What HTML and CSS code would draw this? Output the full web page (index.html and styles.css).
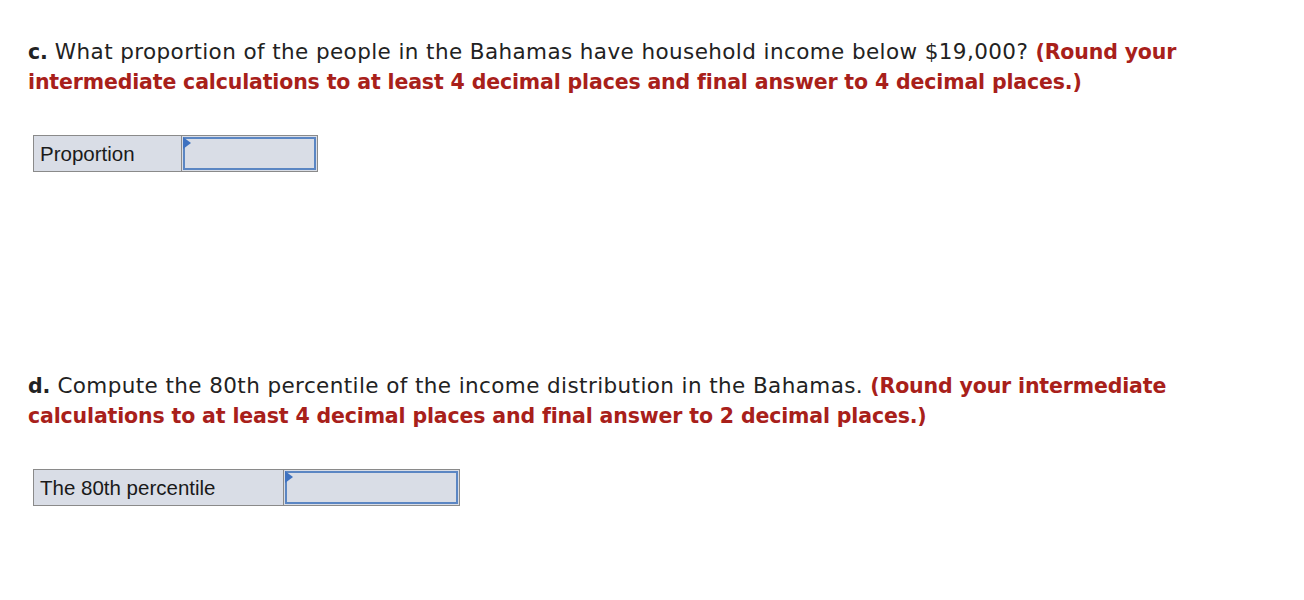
FILE: index.html
```html
<!DOCTYPE html>
<html>
<head>
<meta charset="utf-8">
<link rel="stylesheet" href="styles.css">
</head>
<body>
<div class="page">
  <section class="part part-c">
    <p class="question"><b>c.</b> What proportion of the people in the Bahamas have household income below $19,000? <span class="hint">(Round your intermediate calculations to at least 4 decimal places and final answer to 4 decimal places.)</span></p>
    <div class="answer-table">
      <div class="label label-c">Proportion</div>
      <div class="input-cell input-c"><span class="flag"></span></div>
    </div>
  </section>
  <section class="part part-d">
    <p class="question"><b>d.</b> Compute the 80th percentile of the income distribution in the Bahamas. <span class="hint">(Round your intermediate calculations to at least 4 decimal places and final answer to 2 decimal places.)</span></p>
    <div class="answer-table">
      <div class="label label-d">The 80th percentile</div>
      <div class="input-cell input-d"><span class="flag"></span></div>
    </div>
  </section>
</div>
</body>
</html>
```
FILE: styles.css
```css
html, body {
  margin: 0;
  padding: 0;
  background: #ffffff;
}
.page {
  padding: 37px 0 0 28px;
  width: 1160px;
}
.question {
  margin: 0;
  font-family: "DejaVu Sans", sans-serif;
  font-size: 21.5px;
  letter-spacing: 0.4px;
  line-height: 29px;
  color: #222222;
}
.question b {
  font-weight: 700;
  font-size: 20.5px;
  letter-spacing: -0.15px;
}
.hint {
  color: #a8201a;
  font-weight: 700;
  font-size: 20.5px;
  letter-spacing: -0.15px;
}
.answer-table {
  display: flex;
  margin: 38px 0 0 5px;
  border: 1px solid #8a8a8a;
  width: max-content;
  background: #d9dde6;
}
.label {
  font-family: "Liberation Sans", Arial, sans-serif;
  font-size: 20.5px;
  letter-spacing: 0;
  color: #1a1a1a;
  padding: 0 0 0 6px;
  height: 35px;
  line-height: 35px;
  box-sizing: border-box;
}
.label-c { width: 147px; }
.label-d { width: 249px; }
.input-cell {
  position: relative;
  border-left: 1px solid #8a8a8a;
  padding: 1px;
  box-sizing: border-box;
  height: 35px;
}
.input-cell::after {
  content: "";
  display: block;
  height: 100%;
  border: 2px solid #5b86c3;
  box-sizing: border-box;
}
.input-c { width: 136px; }
.input-d { width: 176px; }
.flag {
  position: absolute;
  top: 1px;
  left: 1px;
  width: 0;
  height: 0;
  border-top: 6px solid transparent;
  border-bottom: 6px solid transparent;
  border-left: 8px solid #3f72c0;
}
.part-d {
  margin-top: 199px;
}
```
